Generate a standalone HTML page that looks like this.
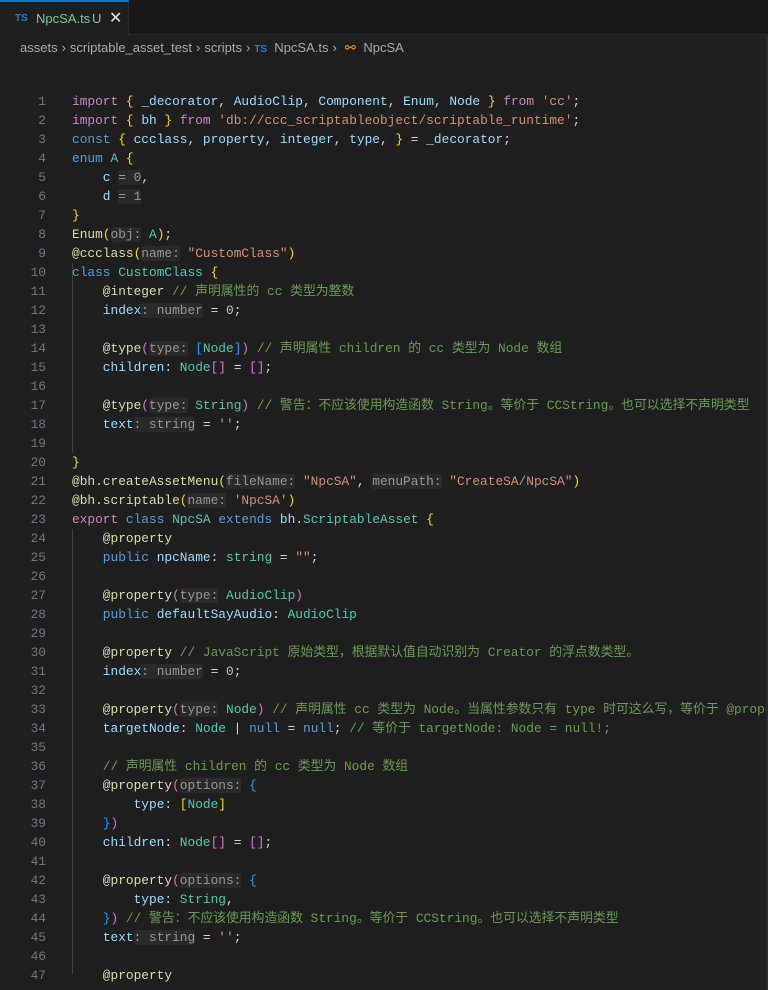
<!DOCTYPE html>
<html><head><meta charset="utf-8"><style>
*{margin:0;padding:0;box-sizing:border-box}
html,body{width:768px;height:990px;overflow:hidden}
body{background:#1f1f1f;position:relative;font-family:"Liberation Sans","Noto Sans CJK SC",sans-serif}
#tabs{position:absolute;left:0;top:0;width:768px;height:35px;background:#181818;border-bottom:1px solid #2b2b2b}
#tab{position:absolute;left:0;top:0;width:129px;height:36px;background:#1f1f1f;border-top:2px solid #0078d4;border-right:1px solid #2b2b2b}
.ts{color:#3178c6;font-weight:bold;font-size:10px;position:absolute}
#tab .name{position:absolute;left:36px;top:9px;font-size:13px;color:#73c991}
#tab .u{position:absolute;left:92px;top:9px;font-size:13px;color:#73c991}
#tab .x{position:absolute;left:109px;top:6px;font-size:16px;color:#e0e0e0}
#bc{position:absolute;left:20px;top:40px;font-size:13px;color:#a9a9a9;white-space:nowrap}
#bc span{margin:0 4px}
#code{position:absolute;left:0;top:92px;width:766px;height:898px;overflow:hidden;font-family:"Liberation Mono","Noto Sans CJK SC",monospace;font-size:12.83px;line-height:19px;color:#d4d4d4}
.l{height:19px;position:relative;white-space:nowrap}
.ln{position:absolute;left:0;width:46px;text-align:right;color:#6e7681}
.tx{position:absolute;left:72px;white-space:pre}
.k{color:#c586c0}.b{color:#569cd6}.v{color:#9cdcfe}.t{color:#4ec9b0}.s{color:#ce9178}.c{color:#6a9955}.n{color:#b5cea8}.f{color:#dcdcaa}.p1{color:#ffd700}.p2{color:#da70d6}.p3{color:#179fff}
.h{color:#969696;background:#2a2a2a;border-radius:2px}
.g{position:absolute;left:72px;width:1px;background:#404040}
#rb{position:absolute;right:0;top:35px;width:2px;height:955px;background:#2b2b2b}
</style></head><body>
<div id="tabs"><div id="tab"><span class="ts" style="left:15px;top:11px">TS</span><span class="name">NpcSA.ts</span><span class="u">U</span><span class="x">✕</span></div></div>
<div id="bc">assets<span>›</span>scriptable_asset_test<span>›</span>scripts<span>›</span><b style="color:#3178c6;font-size:10px">TS</b>&nbsp; NpcSA.ts<span>›</span><span style="color:#ee9d28">⚯</span> NpcSA</div>
<div class="g" style="top:263px;height:190px"></div>
<div class="g" style="top:529px;height:445px"></div>
<div id="code"><div class="l"><span class="ln">1</span><span class="tx"><span class="k">import</span> <span class="p1">{</span> <span class="v">_decorator</span>, <span class="v">AudioClip</span>, <span class="v">Component</span>, <span class="v">Enum</span>, <span class="v">Node</span> <span class="p1">}</span> <span class="k">from</span> <span class="s">'cc'</span>;</span></div><div class="l"><span class="ln">2</span><span class="tx"><span class="k">import</span> <span class="p1">{</span> <span class="v">bh</span> <span class="p1">}</span> <span class="k">from</span> <span class="s">'db://ccc_scriptableobject/scriptable_runtime'</span>;</span></div><div class="l"><span class="ln">3</span><span class="tx"><span class="b">const</span> <span class="p1">{</span> <span class="v">ccclass</span>, <span class="v">property</span>, <span class="v">integer</span>, <span class="v">type</span>, <span class="p1">}</span> = <span class="v">_decorator</span>;</span></div><div class="l"><span class="ln">4</span><span class="tx"><span class="b">enum</span> <span class="t">A</span> <span class="p1">{</span></span></div><div class="l"><span class="ln">5</span><span class="tx">    <span class="v">c</span> <span class="h">= 0</span>,</span></div><div class="l"><span class="ln">6</span><span class="tx">    <span class="v">d</span> <span class="h">= 1</span></span></div><div class="l"><span class="ln">7</span><span class="tx"><span class="p1">}</span></span></div><div class="l"><span class="ln">8</span><span class="tx"><span class="f">Enum</span><span class="p1">(</span><span class="h">obj:</span> <span class="t">A</span><span class="p1">)</span>;</span></div><div class="l"><span class="ln">9</span><span class="tx"><span class="f">@ccclass</span><span class="p1">(</span><span class="h">name:</span> <span class="s">"CustomClass"</span><span class="p1">)</span></span></div><div class="l"><span class="ln">10</span><span class="tx"><span class="b">class</span> <span class="t">CustomClass</span> <span class="p1">{</span></span></div><div class="l"><span class="ln">11</span><span class="tx">    <span class="f">@integer</span> <span class="c">// 声明属性的 cc 类型为整数</span></span></div><div class="l"><span class="ln">12</span><span class="tx">    <span class="v">index</span><span class="h">: number</span> = <span class="n">0</span>;</span></div><div class="l"><span class="ln">13</span><span class="tx"></span></div><div class="l"><span class="ln">14</span><span class="tx">    <span class="f">@type</span><span class="p2">(</span><span class="h">type:</span> <span class="p3">[</span><span class="t">Node</span><span class="p3">]</span><span class="p2">)</span> <span class="c">// 声明属性 children 的 cc 类型为 Node 数组</span></span></div><div class="l"><span class="ln">15</span><span class="tx">    <span class="v">children</span>: <span class="t">Node</span><span class="p2">[]</span> = <span class="p2">[]</span>;</span></div><div class="l"><span class="ln">16</span><span class="tx"></span></div><div class="l"><span class="ln">17</span><span class="tx">    <span class="f">@type</span><span class="p2">(</span><span class="h">type:</span> <span class="t">String</span><span class="p2">)</span> <span class="c">// 警告：不应该使用构造函数 String。等价于 CCString。也可以选择不声明类型</span></span></div><div class="l"><span class="ln">18</span><span class="tx">    <span class="v">text</span><span class="h">: string</span> = <span class="s">''</span>;</span></div><div class="l"><span class="ln">19</span><span class="tx"></span></div><div class="l"><span class="ln">20</span><span class="tx"><span class="p1">}</span></span></div><div class="l"><span class="ln">21</span><span class="tx"><span class="f">@bh.createAssetMenu</span><span class="p1">(</span><span class="h">fileName:</span> <span class="s">"NpcSA"</span>, <span class="h">menuPath:</span> <span class="s">"CreateSA/NpcSA"</span><span class="p1">)</span></span></div><div class="l"><span class="ln">22</span><span class="tx"><span class="f">@bh.scriptable</span><span class="p1">(</span><span class="h">name:</span> <span class="s">'NpcSA'</span><span class="p1">)</span></span></div><div class="l"><span class="ln">23</span><span class="tx"><span class="k">export</span> <span class="b">class</span> <span class="t">NpcSA</span> <span class="b">extends</span> <span class="v">bh</span>.<span class="t">ScriptableAsset</span> <span class="p1">{</span></span></div><div class="l"><span class="ln">24</span><span class="tx">    <span class="f">@property</span></span></div><div class="l"><span class="ln">25</span><span class="tx">    <span class="b">public</span> <span class="v">npcName</span>: <span class="t">string</span> = <span class="s">""</span>;</span></div><div class="l"><span class="ln">26</span><span class="tx"></span></div><div class="l"><span class="ln">27</span><span class="tx">    <span class="f">@property</span><span class="p2">(</span><span class="h">type:</span> <span class="t">AudioClip</span><span class="p2">)</span></span></div><div class="l"><span class="ln">28</span><span class="tx">    <span class="b">public</span> <span class="v">defaultSayAudio</span>: <span class="t">AudioClip</span></span></div><div class="l"><span class="ln">29</span><span class="tx"></span></div><div class="l"><span class="ln">30</span><span class="tx">    <span class="f">@property</span> <span class="c">// JavaScript 原始类型，根据默认值自动识别为 Creator 的浮点数类型。</span></span></div><div class="l"><span class="ln">31</span><span class="tx">    <span class="v">index</span><span class="h">: number</span> = <span class="n">0</span>;</span></div><div class="l"><span class="ln">32</span><span class="tx"></span></div><div class="l"><span class="ln">33</span><span class="tx">    <span class="f">@property</span><span class="p2">(</span><span class="h">type:</span> <span class="t">Node</span><span class="p2">)</span> <span class="c">// 声明属性 cc 类型为 Node。当属性参数只有 type 时可这么写，等价于 @property</span></span></div><div class="l"><span class="ln">34</span><span class="tx">    <span class="v">targetNode</span>: <span class="t">Node</span> | <span class="b">null</span> = <span class="b">null</span>; <span class="c">// 等价于 targetNode: Node = null!;</span></span></div><div class="l"><span class="ln">35</span><span class="tx"></span></div><div class="l"><span class="ln">36</span><span class="tx">    <span class="c">// 声明属性 children 的 cc 类型为 Node 数组</span></span></div><div class="l"><span class="ln">37</span><span class="tx">    <span class="f">@property</span><span class="p2">(</span><span class="h">options:</span> <span class="p3">{</span></span></div><div class="l"><span class="ln">38</span><span class="tx">        <span class="v">type</span>: <span class="p1">[</span><span class="t">Node</span><span class="p1">]</span></span></div><div class="l"><span class="ln">39</span><span class="tx">    <span class="p3">}</span><span class="p2">)</span></span></div><div class="l"><span class="ln">40</span><span class="tx">    <span class="v">children</span>: <span class="t">Node</span><span class="p2">[]</span> = <span class="p2">[]</span>;</span></div><div class="l"><span class="ln">41</span><span class="tx"></span></div><div class="l"><span class="ln">42</span><span class="tx">    <span class="f">@property</span><span class="p2">(</span><span class="h">options:</span> <span class="p3">{</span></span></div><div class="l"><span class="ln">43</span><span class="tx">        <span class="v">type</span>: <span class="t">String</span>,</span></div><div class="l"><span class="ln">44</span><span class="tx">    <span class="p3">}</span><span class="p2">)</span> <span class="c">// 警告：不应该使用构造函数 String。等价于 CCString。也可以选择不声明类型</span></span></div><div class="l"><span class="ln">45</span><span class="tx">    <span class="v">text</span><span class="h">: string</span> = <span class="s">''</span>;</span></div><div class="l"><span class="ln">46</span><span class="tx"></span></div><div class="l"><span class="ln">47</span><span class="tx">    <span class="f">@property</span></span></div></div>
<div id="rb"></div>
</body></html>
